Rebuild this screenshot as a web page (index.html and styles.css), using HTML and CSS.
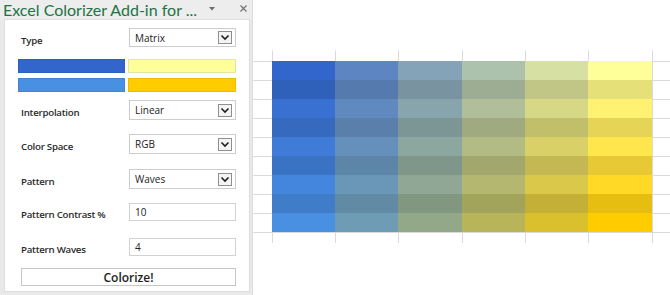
FILE: index.html
```html
<!DOCTYPE html>
<html>
<head>
<meta charset="utf-8">
<link rel="stylesheet" href="styles.css">
</head>
<body>
<div class="panel">
  <div class="titlebar">
    <span class="title">Excel Colorizer Add-in for ...</span>
    <svg class="tb-menu" width="6" height="4" viewBox="0 0 6 4"><path d="M0 0 L6 0 L3 3.5 Z" fill="#6d6d6d"/></svg>
    <svg class="tb-close" width="7" height="7" viewBox="0 0 7 7"><path d="M0.5 0.5 L6.5 6.5 M6.5 0.5 L0.5 6.5" stroke="#6d6d6d" stroke-width="1.1" fill="none"/></svg>
  </div>
  <div class="content">
    <div class="field f-type">
      <span class="label">Type</span>
      <div class="select">Matrix<span class="arrow"><svg width="10" height="7" viewBox="0 0 10 7"><path d="M1.5 1.5 L5 5 L8.5 1.5" stroke="#1e1e1e" stroke-width="1.6" fill="none"/></svg></span></div>
    </div>
    <div class="swatches">
      <div class="swatch sw-tl"></div>
      <div class="swatch sw-tr"></div>
      <div class="swatch sw-bl"></div>
      <div class="swatch sw-br"></div>
    </div>
    <div class="field f-interp">
      <span class="label">Interpolation</span>
      <div class="select">Linear<span class="arrow"><svg width="10" height="7" viewBox="0 0 10 7"><path d="M1.5 1.5 L5 5 L8.5 1.5" stroke="#1e1e1e" stroke-width="1.6" fill="none"/></svg></span></div>
    </div>
    <div class="field f-space">
      <span class="label">Color Space</span>
      <div class="select">RGB<span class="arrow"><svg width="10" height="7" viewBox="0 0 10 7"><path d="M1.5 1.5 L5 5 L8.5 1.5" stroke="#1e1e1e" stroke-width="1.6" fill="none"/></svg></span></div>
    </div>
    <div class="field f-pattern">
      <span class="label">Pattern</span>
      <div class="select">Waves<span class="arrow"><svg width="10" height="7" viewBox="0 0 10 7"><path d="M1.5 1.5 L5 5 L8.5 1.5" stroke="#1e1e1e" stroke-width="1.6" fill="none"/></svg></span></div>
    </div>
    <div class="field f-contrast">
      <span class="label">Pattern Contrast %</span>
      <div class="input">10</div>
    </div>
    <div class="field f-waves">
      <span class="label">Pattern Waves</span>
      <div class="input">4</div>
    </div>
    <div class="button">Colorize!</div>
  </div>
</div>
<div class="sheet" id="sheet"></div>
<script src="script.js"></script>
</body>
</html>
```
FILE: styles.css
```css
html, body {
  margin: 0;
  padding: 0;
}
body {
  width: 670px;
  height: 295px;
  overflow: hidden;
  background: #ffffff;
  display: flex;
  font-family: "Open Sans", "Noto Sans", sans-serif;
  color: #262626;
}
.panel {
  width: 252px;
  height: 295px;
  flex: none;
  background: #e9e9e9;
  display: flex;
  flex-direction: column;
}
.titlebar {
  height: 20px;
  display: flex;
  align-items: center;
  padding-left: 3px;
  background: #ededed;
}
.title {
  font-family: Lato, "Open Sans", sans-serif;
  font-weight: 400;
  font-size: 16px;
  color: #217346;
  white-space: nowrap;
  line-height: 20px;
}
.tb-menu {
  margin-left: 12px;
  margin-top: -3px;
}
.tb-close {
  margin-left: 25px;
  margin-top: -3px;
}
.content {
  flex: 1;
  margin: 0 3px 4px 5px;
  background: #ffffff;
  padding: 8px 13px 0 13px;
  box-shadow: 0 0 0 1px #dedede;
}
.field {
  display: grid;
  grid-template-columns: 1fr 107px;
  align-items: center;
  margin-left: 3px;
}
.label {
  font-size: 9.7px;
  letter-spacing: -0.25px;
  font-weight: 600;
  color: #2b2b2b;
  padding-top: 5px;
  white-space: nowrap;
}
.select, .input {
  box-sizing: border-box;
  border: 1px solid #cccccc;
  font-size: 10px;
  color: #222;
  padding-left: 5px;
  display: flex;
  align-items: center;
}
.select {
  height: 19px;
}
.input {
  height: 18px;
  border-color: #d2d2d2;
}
.arrow {
  margin-left: auto;
  margin-right: 3px;
  width: 14px;
  height: 13px;
  box-sizing: border-box;
  border: 1px solid #8f8f8f;
  background: #f4f4f4;
  display: flex;
  align-items: center;
  justify-content: center;
}
.f-interp .select, .f-space .select, .f-pattern .select {
  height: 20px;
}
.swatches {
  margin-top: 12px;
  display: grid;
  grid-template-columns: 107px 108px;
  grid-template-rows: 14px 14px;
  column-gap: 3px;
  row-gap: 5px;
}
.swatch {
  box-sizing: border-box;
  border: 1px solid rgba(0, 0, 0, 0.08);
}
.sw-tl { background: #3366cc; }
.sw-tr { background: #ffff99; border-color: #e4e4a8; }
.sw-bl { background: #4a90e2; }
.sw-br { background: #ffcc00; }
.f-interp { margin-top: 8px; }
.f-space { margin-top: 14px; }
.f-pattern { margin-top: 15px; }
.f-contrast { margin-top: 14px; }
.f-waves { margin-top: 17px; }
.button {
  margin-top: 12px;
  margin-left: 3px;
  height: 18px;
  box-sizing: border-box;
  border: 1px solid #c6c6c6;
  display: flex;
  align-items: center;
  justify-content: center;
  font-size: 12px;
  font-weight: 600;
  color: #1e1e1e;
}
.sheet {
  flex: 1;
  padding-top: 50px;
  display: grid;
  grid-template-columns: 19px 63px 63px 64px 63px 63px 64px 1fr;
  grid-template-rows: 11px repeat(9, 19px) 11px;
  align-content: start;
  border-left: 1px solid #dcdcdc;
}
.cell {
  box-sizing: border-box;
  border-left: 1px solid #dadada;
  border-top: 1px solid #dadada;
}
.cell.c0 { border-left-color: transparent; }
.cell.r0 { border-top-color: transparent; }
```
FILE: script.js
```js
(function () {
  var TL = [51, 102, 204], TR = [255, 255, 153];
  var BL = [74, 144, 226], BR = [255, 204, 0];
  function lerp(a, b, t) {
    return [a[0] + (b[0] - a[0]) * t, a[1] + (b[1] - a[1]) * t, a[2] + (b[2] - a[2]) * t];
  }
  var sheet = document.getElementById('sheet');
  for (var r = 0; r < 11; r++) {
    for (var c = 0; c < 8; c++) {
      var d = document.createElement('div');
      d.className = 'cell r' + r + ' c' + c;
      if (r >= 1 && r <= 9 && c >= 1 && c <= 6) {
        var i = r - 1, j = c - 1;
        var top = lerp(TL, TR, j / 5), bot = lerp(BL, BR, j / 5);
        var col = lerp(top, bot, i / 8);
        var f = (i % 2 === 1) ? 0.9 : 1;
        var rgb = 'rgb(' + Math.round(col[0] * f) + ',' + Math.round(col[1] * f) + ',' + Math.round(col[2] * f) + ')';
        d.style.background = rgb;
        d.style.borderColor = rgb;
      }
      sheet.appendChild(d);
    }
  }
})();
```
